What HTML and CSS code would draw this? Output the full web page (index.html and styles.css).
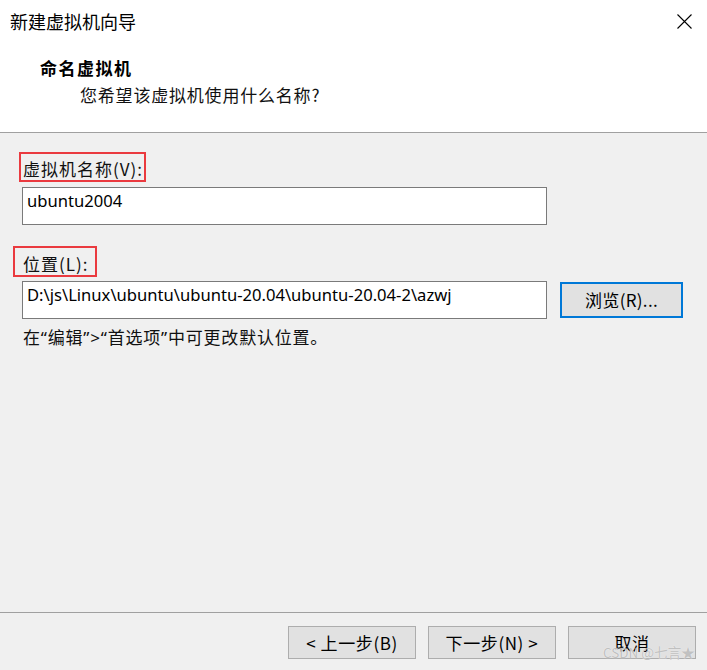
FILE: index.html
```html
<!DOCTYPE html>
<html lang="zh-CN">
<head>
<meta charset="utf-8">
<title>新建虚拟机向导</title>
<link rel="stylesheet" href="styles.css">
</head>
<body>
<div class="window">
  <header class="header">
    <div class="titlebar">
      <span class="title">新建虚拟机向导</span>
      <svg class="close" width="15" height="15" viewBox="0 0 15 15" aria-label="关闭">
        <path d="M0.5 0.5 L14.5 14.5 M14.5 0.5 L0.5 14.5" stroke="#000" stroke-width="1.1" fill="none"/>
      </svg>
    </div>
    <div class="heading">命名虚拟机</div>
    <div class="subtitle">您希望该虚拟机使用什么名称?</div>
  </header>

  <main class="content">
    <div class="field field-name">
      <label class="label label-name">虚拟机名称(V):</label>
      <div class="input">ubuntu2004</div>
    </div>
    <div class="field field-loc">
      <label class="label label-loc">位置(L):</label>
      <div class="row">
        <div class="input">D:\js\Linux\ubuntu\ubuntu-20.04\ubuntu-20.04-2\azwj</div>
        <button class="btn btn-browse">浏览(R)...</button>
      </div>
    </div>
    <p class="hint">在“编辑”&gt;“首选项”中可更改默认位置。</p>
  </main>

  <footer class="footer">
    <button class="btn btn-nav">&lt; 上一步(B)</button>
    <button class="btn btn-nav">下一步(N) &gt;</button>
    <button class="btn btn-nav">取消</button>
  </footer>

  <span class="watermark">CSDN @七言★</span>
</div>
</body>
</html>
```

FILE: styles.css
```css
* { box-sizing: border-box; }

html, body {
  margin: 0;
  padding: 0;
}

body {
  background: #f0f0f0;
  font-family: "Noto Sans CJK SC", "Noto Sans", sans-serif;
  color: #000;
}

.window {
  position: relative;
  width: 707px;
  height: 670px;
  display: flex;
  flex-direction: column;
  background: #f0f0f0;
}

/* ---------- header ---------- */
.header {
  background: #fff;
  height: 133px;
  border-bottom: 1px solid #a0a0a0;
}

.titlebar {
  display: flex;
  justify-content: space-between;
  align-items: flex-start;
  padding: 12px 15px 0 10px;
}

.title {
  font-size: 18px;
  line-height: 18px;
}

.close {
  display: block;
  margin-top: 2px;
}

.heading {
  margin-top: 29px;
  padding-left: 40px;
  font-size: 17px;
  line-height: 17px;
  font-weight: 700;
  letter-spacing: 1.5px;
}

.subtitle {
  margin-top: 10px;
  padding-left: 80px;
  font-size: 17px;
  line-height: 17px;
  letter-spacing: 0.8px;
  color: #111;
}

/* ---------- content ---------- */
.content {
  flex: 1;
  padding-top: 19px;
}

.field {
  display: flex;
  flex-direction: column;
  align-items: flex-start;
}

.label {
  display: block;
  border: 2px solid #ea3a3f;
  font-size: 17px;
  letter-spacing: 1px;
  color: #111;
}

.label-name {
  margin-left: 19px;
  height: 30px;
  padding: 3px 1px 0 2px;
  line-height: 23px;
}

.field-loc {
  margin-top: 21px;
}

.label-loc {
  margin-left: 13px;
  height: 31px;
  padding: 4px 7px 0 8px;
  line-height: 23px;
}

.input {
  margin-left: 22px;
  margin-top: 5px;
  width: 525px;
  height: 38px;
  border: 1px solid #7a7a7a;
  background: #fff;
  padding: 1px 0 0 4px;
  font-family: "Noto Sans", "Open Sans", sans-serif;
  font-size: 16.6px;
  line-height: 24px;
  white-space: nowrap;
  overflow: hidden;
}

.row {
  display: flex;
  align-items: center;
  margin-top: 4px;
}

.row .input {
  margin-top: 0;
}

.btn {
  font-family: "Noto Sans CJK SC", "Noto Sans", sans-serif;
  font-size: 17px;
  color: #000;
  background: #e1e1e1;
  border: 1px solid #adadad;
  padding: 0;
  margin: 0;
}

.btn-browse {
  margin-left: 13px;
  width: 123px;
  height: 36px;
  border: 2px solid #0078d7;
  line-height: 30px;
  letter-spacing: 0.3px;
}

.hint {
  margin: 10px 0 0 23px;
  font-family: "Noto Sans", "Noto Sans CJK SC", sans-serif;
  font-size: 17px;
  line-height: 17px;
  letter-spacing: 0.8px;
  color: #111;
}

/* ---------- footer ---------- */
.footer {
  height: 58px;
  border-top: 1px solid #a0a0a0;
  display: flex;
  justify-content: flex-end;
  gap: 12px;
  padding: 13px 11px 0 0;
}

.btn-nav {
  width: 128px;
  height: 33px;
  line-height: 30px;
  letter-spacing: 0.6px;
}

.watermark {
  position: absolute;
  left: 603px;
  top: 645px;
  font-family: "Noto Sans CJK SC", "Noto Sans", sans-serif;
  font-size: 13.5px;
  line-height: 15px;
  color: rgba(185, 185, 185, 0.9);
  text-shadow: 0 0 1px rgba(255, 255, 255, 0.9);
}
```
